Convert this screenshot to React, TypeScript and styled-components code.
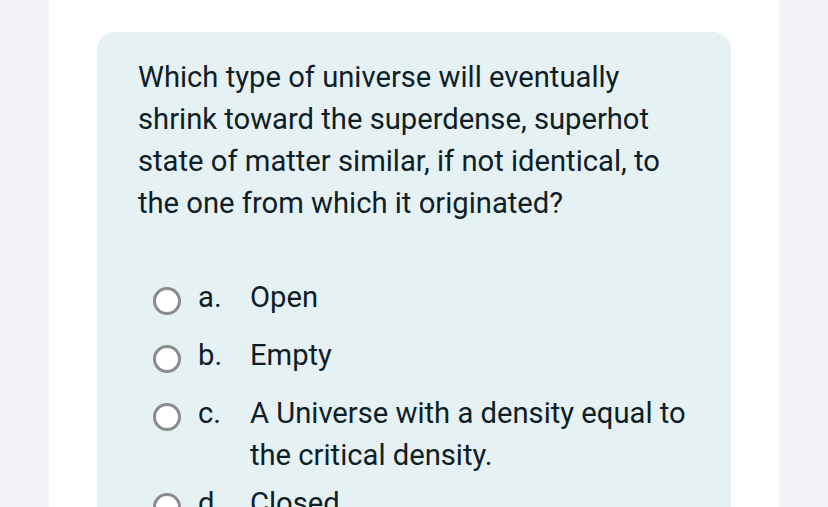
import React from "react";
import styled, { createGlobalStyle } from "styled-components";

const GlobalStyle = createGlobalStyle`
  html, body {
    margin: 0;
    padding: 0;
    background: #f0f2f6;
  }
  body {
    font-family: Roboto, "Liberation Sans", sans-serif;
    -webkit-font-smoothing: antialiased;
  }
`;

const Page = styled.div`
  display: flex;
  justify-content: center;
  min-height: 100vh;
`;

const Column = styled.main`
  width: 730px;
  background: #ffffff;
  padding: 32px 48px 40px;
  box-sizing: border-box;
`;

const QuestionCard = styled.section`
  background: #e6f1f4;
  border-radius: 18px;
  padding: 24px 40px 32px 41px;
  color: #0e2027;
`;

const QuestionText = styled.p`
  margin: 0;
  font-size: 29.2px;
  line-height: 42px;
  font-weight: 400;
`;

const Options = styled.div`
  display: flex;
  flex-direction: column;
  margin-top: 52px;
  margin-left: 15px;
`;

const OptionRow = styled.label`
  display: flex;
  align-items: flex-start;
  min-height: 58px;
  padding: 0 0 6px;
  box-sizing: border-box;
  cursor: pointer;
`;

const Radio = styled.span`
  flex: none;
  width: 28px;
  height: 28px;
  box-sizing: border-box;
  border: 3px solid #8b8b8d;
  border-radius: 50%;
  background: #ffffff;
  margin-top: 11px;
  margin-right: 17px;
`;

const Letter = styled.span`
  flex: none;
  width: 52px;
  font-size: 29.2px;
  line-height: 42px;
`;

const Answer = styled.span`
  font-size: 29.2px;
  line-height: 42px;
`;

const options = [
  { letter: "a.", text: "Open" },
  { letter: "b.", text: "Empty" },
  { letter: "c.", text: "A Universe with a density equal to the critical density." },
  { letter: "d.", text: "Closed" },
];

export default function App() {
  return (
    <Page>
      <GlobalStyle />
      <Column>
        <QuestionCard>
          <QuestionText>
            Which type of universe will eventually shrink toward the superdense,
            superhot state of matter similar, if not identical, to the one from
            which it originated?
          </QuestionText>
          <Options>
            {options.map((o) => (
              <OptionRow key={o.letter}>
                <Radio />
                <Letter>{o.letter}</Letter>
                <Answer>{o.text}</Answer>
              </OptionRow>
            ))}
          </Options>
        </QuestionCard>
      </Column>
    </Page>
  );
}
